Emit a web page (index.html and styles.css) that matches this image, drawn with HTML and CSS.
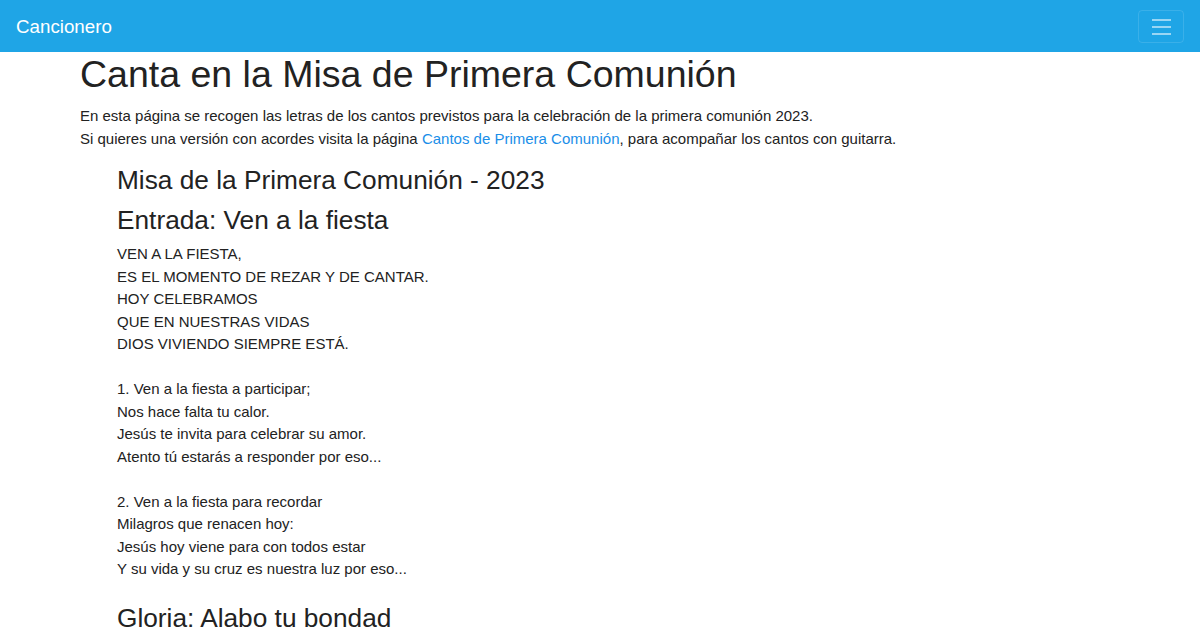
FILE: index.html
```html
<!DOCTYPE html>
<html lang="es">
<head>
<meta charset="utf-8">
<title>Cancionero</title>
<link rel="stylesheet" href="styles.css">
</head>
<body>
<nav class="navbar">
  <a class="brand" href="#">Cancionero</a>
  <button class="toggler" aria-label="Menú">
    <span class="bar"></span><span class="bar"></span><span class="bar"></span>
  </button>
</nav>
<main class="container">
  <h1 class="title">Canta en la Misa de Primera Comunión</h1>
  <p class="intro">En esta página se recogen las letras de los cantos previstos para la celebración de la primera comunión 2023.<br>Si quieres una versión con acordes visita la página <a href="#">Cantos de Primera Comunión</a>, para acompañar los cantos con guitarra.</p>
  <section class="mass">
    <h2 class="mass-title">Misa de la Primera Comunión - 2023</h2>
    <h3 class="song-title">Entrada: Ven a la fiesta</h3>
    <p class="lyrics">VEN A LA FIESTA,<br>ES EL MOMENTO DE REZAR Y DE CANTAR.<br>HOY CELEBRAMOS<br>QUE EN NUESTRAS VIDAS<br>DIOS VIVIENDO SIEMPRE ESTÁ.<br><br>1. Ven a la fiesta a participar;<br>Nos hace falta tu calor.<br>Jesús te invita para celebrar su amor.<br>Atento tú estarás a responder por eso...<br><br>2. Ven a la fiesta para recordar<br>Milagros que renacen hoy:<br>Jesús hoy viene para con todos estar<br>Y su vida y su cruz es nuestra luz por eso...</p>
    <h3 class="song-title">Gloria: Alabo tu bondad</h3>
  </section>
</main>
</body>
</html>
```
FILE: styles.css
```css
* { box-sizing: border-box; }
html, body { margin: 0; padding: 0; }
body {
  font-family: "Liberation Sans", Arial, sans-serif;
  font-size: 15px;
  line-height: 1.5;
  color: #222;
  background: #fff;
  overflow: hidden;
}
.navbar {
  height: 52px;
  background: #1fa5e6;
  display: flex;
  align-items: center;
  justify-content: space-between;
  padding: 0 16px;
}
.brand {
  color: #fff;
  font-size: 18.75px;
  text-decoration: none;
  line-height: 1;
  padding-top: 3px;
}
.toggler {
  width: 46px;
  height: 33px;
  margin-top: 1px;
  background: transparent;
  border: 1px solid rgba(255,255,255,0.12);
  border-radius: 4px;
  display: flex;
  flex-direction: column;
  align-items: center;
  justify-content: center;
  gap: 5px;
  padding: 0;
}
.toggler .bar {
  display: block;
  width: 19px;
  height: 2px;
  background: rgba(255,255,255,0.55);
}
.container {
  padding: 0 80px;
}
.title {
  font-size: 37.5px;
  font-weight: 400;
  line-height: 1.2;
  margin: 0 0 8px;
}
.intro {
  margin: 0;
}
.intro a {
  color: #1a8ee8;
  text-decoration: none;
}
.mass {
  padding-left: 37px;
}
.mass-title {
  font-size: 26.25px;
  font-weight: 400;
  line-height: 1.2;
  margin: 15px 0 8px;
}
.song-title {
  font-size: 26.25px;
  font-weight: 400;
  line-height: 1.2;
  margin: 0 0 7px;
}
.lyrics {
  margin: 0 0 22px;
}
```
